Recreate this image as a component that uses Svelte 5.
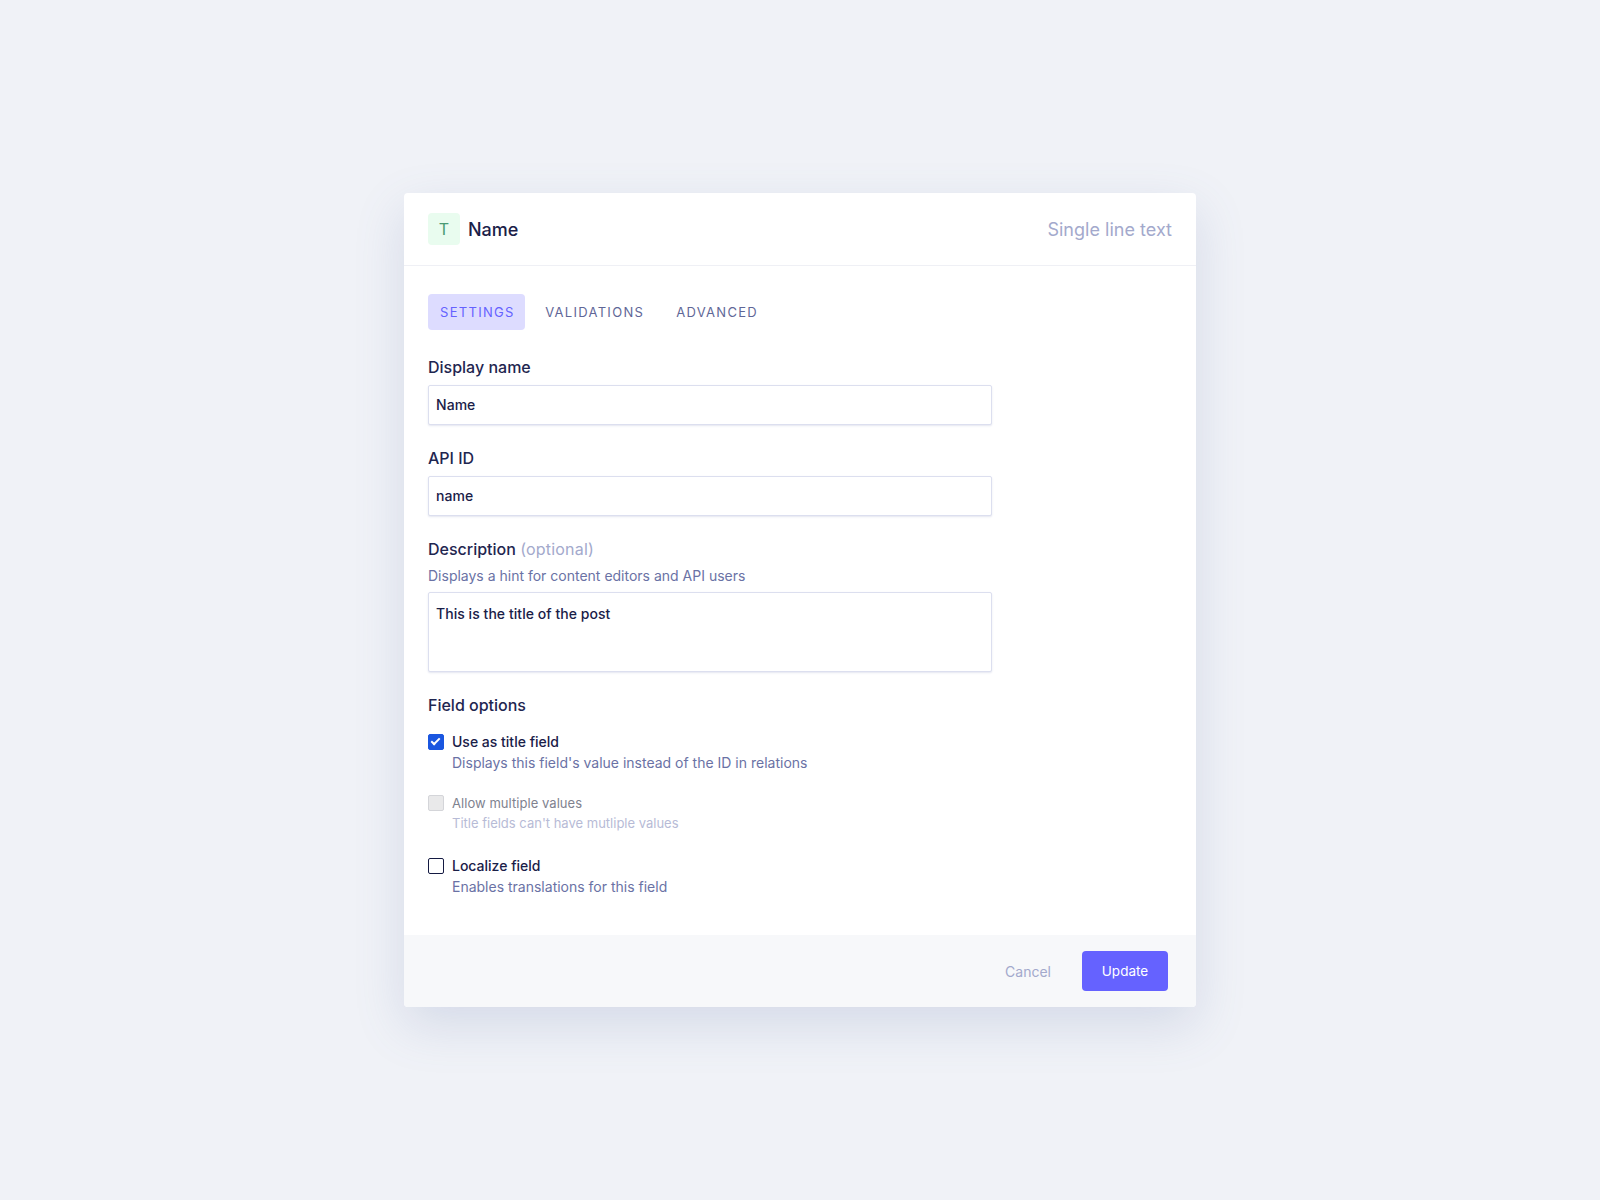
<script lang="ts">
  let displayName = 'Name';
  let apiId = 'name';
  let description = 'This is the title of the post';

  const tabs = ['Settings', 'Validations', 'Advanced'];
  let activeTab = 'Settings';

  let useAsTitle = true;
  let localize = false;
</script>

<main class="page">
  <form class="dialog" on:submit|preventDefault>
    <header class="dialog-head">
      <div class="field-type">
        <span class="type-icon">T</span>
        <h2>Name</h2>
      </div>
      <span class="type-name">Single line text</span>
    </header>

    <div class="dialog-body">
      <nav class="tabs">
        {#each tabs as tab}
          <button
            type="button"
            class="tab"
            class:active={tab === activeTab}
            on:click={() => (activeTab = tab)}>{tab}</button
          >
        {/each}
      </nav>

      <div class="field">
        <label for="display-name">Display name</label>
        <input id="display-name" bind:value={displayName} />
      </div>

      <div class="field">
        <label for="api-id">API ID</label>
        <input id="api-id" bind:value={apiId} />
      </div>

      <div class="field">
        <label for="description">Description <span class="optional">(optional)</span></label>
        <p class="field-hint">Displays a hint for content editors and API users</p>
        <textarea id="description" bind:value={description}></textarea>
      </div>

      <h3>Field options</h3>

      <label class="option">
        <input type="checkbox" bind:checked={useAsTitle} />
        <span class="option-text">
          <span class="option-title">Use as title field</span>
          <span class="option-hint">Displays this field's value instead of the ID in relations</span>
        </span>
      </label>

      <label class="option disabled">
        <input type="checkbox" disabled />
        <span class="option-text">
          <span class="option-title">Allow multiple values</span>
          <span class="option-hint">Title fields can't have mutliple values</span>
        </span>
      </label>

      <label class="option">
        <input type="checkbox" bind:checked={localize} />
        <span class="option-text">
          <span class="option-title">Localize field</span>
          <span class="option-hint">Enables translations for this field</span>
        </span>
      </label>
    </div>

    <footer class="dialog-actions">
      <button type="button" class="cancel">Cancel</button>
      <button type="submit" class="update">Update</button>
    </footer>
  </form>
</main>

<style>
  :global(body) {
    margin: 0;
    background: #f0f2f7;
  }

  .page {
    height: 1200px;
    display: grid;
    place-items: center;
    font-family: Inter, "Liberation Sans", sans-serif;
    color: #0f1438;
  }

  .dialog {
    width: 792px;
    height: 814px;
    display: flex;
    flex-direction: column;
    border-radius: 4px;
    background: #fff;
    box-shadow: 0 18px 50px rgba(90, 110, 165, 0.18);
    overflow: hidden;
  }

  .dialog-head {
    flex: none;
    height: 72px;
    display: flex;
    align-items: center;
    justify-content: space-between;
    padding: 0 24px;
    border-bottom: 1px solid #eff0f5;
  }

  .field-type {
    display: flex;
    align-items: center;
    gap: 8px;
  }

  .type-icon {
    width: 32px;
    height: 32px;
    display: grid;
    place-items: center;
    border-radius: 4px;
    background: #e9fcef;
    color: #4a9a73;
    font-size: 16px;
  }

  h2 {
    margin: 0;
    font-size: 18px;
    font-weight: 500;
    color: #1a2048;
  }

  .type-name {
    font-size: 18px;
    letter-spacing: 0.02px;
    color: #a3a9cc;
  }

  .dialog-body {
    flex: 1;
    padding: 28px 24px 0;
  }

  .tabs {
    display: flex;
    gap: 8px;
    margin-bottom: 27px;
  }

  .tab {
    height: 36px;
    padding: 0 12px;
    border: 0;
    border-radius: 4px;
    background: transparent;
    color: #5f6797;
    font: 400 13px Inter, "Liberation Sans", sans-serif;
    letter-spacing: 1.3px;
    text-transform: uppercase;
  }

  .tab.active {
    padding-right: 10.5px;
    background: #dddcff;
    color: #6562ff;
  }

  .field {
    width: 564px;
    margin-bottom: 23px;
  }

  .field label {
    display: block;
    margin-bottom: 8px;
    font-size: 16px;
    line-height: 20px;
    font-weight: 500;
    color: #1f2650;
  }

  .optional {
    font-weight: 400;
    letter-spacing: 0.2px;
    color: #a3a9cc;
  }

  .field-hint {
    margin: -1px 0 6px;
    font-size: 14px;
    line-height: 20px;
    color: #6a72a5;
  }

  .field input,
  textarea {
    display: block;
    box-sizing: border-box;
    width: 100%;
    height: 40px;
    padding: 0 7px 2px;
    border: 1px solid #dcdfef;
    border-radius: 2px;
    background: #fff;
    box-shadow: 0 1px 2px rgba(90, 100, 160, 0.16);
    color: #1a2048;
    font: 500 14px Inter, "Liberation Sans", sans-serif;
    letter-spacing: 0.05px;
    outline: none;
  }

  textarea {
    height: 80px;
    padding: 11px 7px;
    line-height: 20px;
    resize: none;
  }

  h3 {
    margin: 0 0 19px;
    font-size: 16px;
    line-height: 20px;
    font-weight: 500;
    color: #1f2650;
  }

  .option {
    display: flex;
    gap: 8px;
    margin-bottom: 24px;
  }

  .option.disabled {
    margin-bottom: 27px;
  }

  .option input {
    appearance: none;
    flex: none;
    box-sizing: border-box;
    width: 16px;
    height: 16px;
    margin: 0;
    border: 1.5px solid #141a42;
    border-radius: 2px;
    background: #fff;
  }

  .option input:checked {
    border-color: #1a56e0;
    background: #1a56e0;
  }

  .option input:checked::after {
    content: "";
    display: block;
    box-sizing: border-box;
    width: 9px;
    height: 5px;
    margin: 3px 0 0 2px;
    border-left: 2px solid #fff;
    border-bottom: 2px solid #fff;
    transform: rotate(-45deg);
  }

  .option-text {
    display: flex;
    flex-direction: column;
  }

  .option-title {
    font-size: 14px;
    line-height: 16px;
    font-weight: 500;
    color: #1a2048;
  }

  .option-hint {
    margin-top: 5px;
    font-size: 14px;
    line-height: 16px;
    color: #6a72a5;
  }

  .option.disabled input {
    border: 1px solid #d4d5d9;
    background: #e9e9ea;
  }

  .option.disabled .option-title {
    font-size: 13px;
    font-weight: 400;
    letter-spacing: 0.05px;
    color: #80828f;
  }

  .option.disabled .option-hint {
    font-size: 13px;
    margin-top: 4px;
    color: #b7bbd6;
  }

  .dialog-actions {
    flex: none;
    height: 72px;
    box-sizing: border-box;
    display: flex;
    align-items: center;
    justify-content: flex-end;
    gap: 12px;
    padding: 0 28px;
    background: #f7f8fa;
  }

  .dialog-actions button {
    height: 40px;
    border: 0;
    border-radius: 4px;
    font: 400 14px Inter, "Liberation Sans", sans-serif;
  }

  .cancel {
    padding: 1px 19px 0;
    background: transparent;
    color: #a3a9cc;
  }

  .dialog-actions .update {
    width: 86px;
    padding: 0 0 1px;
    background: #6562ff;
    color: #fff;
    font-size: 13.5px;
  }
</style>
